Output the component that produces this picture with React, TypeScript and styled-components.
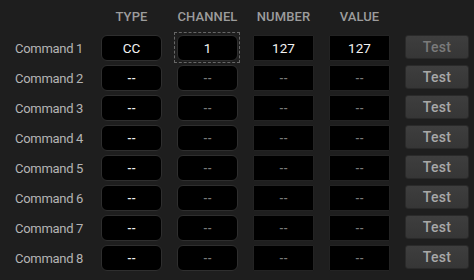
import React from 'react';
import styled, { createGlobalStyle } from 'styled-components';

const GlobalStyle = createGlobalStyle`
  html, body {
    margin: 0;
    padding: 0;
    background: #1e1e1e;
  }
  body {
    font-family: Roboto, 'Liberation Sans', sans-serif;
  }
`;

const Panel = styled.div`
  width: 474px;
  height: 280px;
  box-sizing: border-box;
  padding: 1px 0 0 15px;
  display: grid;
  grid-template-columns: 71px 61px 61px 61px 61px 64px;
  grid-template-rows: 30px repeat(8, 26px);
  column-gap: 15px;
  row-gap: 4px;
  background: #1e1e1e;
`;

const HeadCell = styled.div`
  display: flex;
  align-items: center;
  justify-content: center;
  color: #9c9c9c;
  font-size: 13px;
  font-weight: 500;
  letter-spacing: 0.1px;
`;

const Label = styled.div`
  display: flex;
  align-items: center;
  color: #b4b4b4;
  font-size: 13px;
  letter-spacing: -0.3px;
  white-space: nowrap;
`;

const Field = styled.div<{ $rounded?: boolean; $focused?: boolean; $dim?: boolean; $empty?: boolean }>`
  position: relative;
  display: flex;
  align-items: center;
  justify-content: center;
  background: #000;
  border: 1.5px solid ${(p) => (p.$rounded ? '#2e2e2e' : '#232323')};
  border-radius: ${(p) => (p.$rounded ? '6px' : '1px')};
  box-sizing: border-box;
  color: ${(p) => (p.$dim ? '#7a7a7a' : '#f2f2f2')};
  font-size: ${(p) => (p.$empty ? '11px' : '13.5px')};
  font-weight: ${(p) => (p.$empty ? 700 : 400)};

  &::after {
    content: '';
    display: ${(p) => (p.$focused ? 'block' : 'none')};
    position: absolute;
    inset: -4px -3px -3px -4px;
    border: 1px dashed #666;
  }
`;

const TestButton = styled.button<{ $muted?: boolean }>`
  margin: 0 0 2px;
  padding: 0;
  background: linear-gradient(#3e3e3e, #363636);
  border: 1px solid #2a2a2a;
  border-radius: 3px;
  color: ${(p) => (p.$muted ? '#7a7a7a' : '#a8a8a8')};
  font-family: Roboto, 'Liberation Sans', sans-serif;
  font-size: 14px;
  font-weight: 500;
  letter-spacing: 0.3px;
  cursor: pointer;
`;

type Row = { type: string; channel: string; number: string; value: string };

const rows: Row[] = Array.from({ length: 8 }, (_, i) =>
  i === 0
    ? { type: 'CC', channel: '1', number: '127', value: '127' }
    : { type: '--', channel: '--', number: '--', value: '--' }
);

const App = (): JSX.Element => (
  <>
    <GlobalStyle />
    <Panel>
      <div />
      <HeadCell>TYPE</HeadCell>
      <HeadCell>CHANNEL</HeadCell>
      <HeadCell>NUMBER</HeadCell>
      <HeadCell>VALUE</HeadCell>
      <div />
      {rows.map((r, i) => {
        const empty = r.type === '--';
        return (
          <React.Fragment key={i}>
            <Label>Command {i + 1}</Label>
            <Field $rounded $empty={empty}>{r.type}</Field>
            <Field $rounded $focused={i === 0} $empty={empty} $dim={empty}>
              {r.channel}
            </Field>
            <Field $empty={empty} $dim={empty}>{r.number}</Field>
            <Field $empty={empty} $dim={empty}>{r.value}</Field>
            <TestButton $muted={i === 0}>Test</TestButton>
          </React.Fragment>
        );
      })}
    </Panel>
  </>
);

export default App;
